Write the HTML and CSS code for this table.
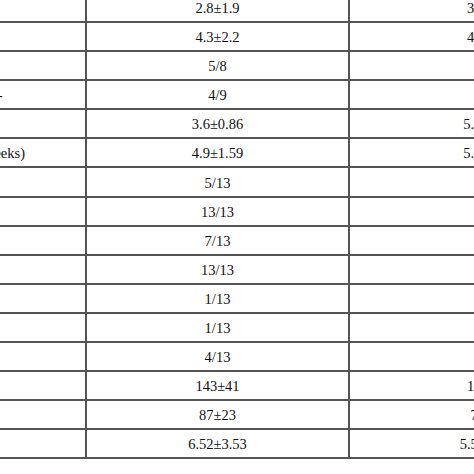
FILE: index.html
```html
<!DOCTYPE html>
<html>
<head>
<meta charset="utf-8">
<link rel="stylesheet" href="styles.css">
</head>
<body>
<div class="page">
<table class="data">
<colgroup><col class="c1"><col class="c2"><col class="c3"></colgroup>
<tbody>
<tr><td class="label">Tumor size (cm)</td><td>2.8±1.9</td><td>3.1±1.6</td></tr>
<tr><td class="label">Lesion count</td><td>4.3±2.2</td><td>4.6±2.1</td></tr>
<tr><td class="label">Male/Female</td><td>5/8</td><td>6/9</td></tr>
<tr><td class="label">Lymph node involvement -</td><td>4/9</td><td>3/8</td></tr>
<tr><td class="label">Serum CRP (mg/L)</td><td>3.6±0.86</td><td>5.1±1.02</td></tr>
<tr><td class="label">Duration of symptoms (weeks)</td><td>4.9±1.59</td><td>5.3±1.44</td></tr>
<tr><td class="label">Fever</td><td>5/13</td><td>6/12</td></tr>
<tr><td class="label">Pain</td><td>13/13</td><td>9/12</td></tr>
<tr><td class="label">Swelling</td><td>7/13</td><td>5/12</td></tr>
<tr><td class="label">Imaging findings</td><td>13/13</td><td>8/12</td></tr>
<tr><td class="label">Recurrence</td><td>1/13</td><td>2/12</td></tr>
<tr><td class="label">Complications</td><td>1/13</td><td>0/12</td></tr>
<tr><td class="label">Reoperation</td><td>4/13</td><td>3/12</td></tr>
<tr><td class="label">Platelets (×10⁹/L)</td><td>143±41</td><td>151±38</td></tr>
<tr><td class="label">Operation time (min)</td><td>87±23</td><td>79±21</td></tr>
<tr><td class="label">Hospital stay (days)</td><td>6.52±3.53</td><td>5.58±3.21</td></tr>
</tbody>
</table>
</div>
</body>
</html>
```
FILE: styles.css
```css
html, body {
  margin: 0;
  padding: 0;
  background: #fff;
}
.page {
  width: 474px;
  height: 474px;
  overflow: hidden;
  background: #fff;
}
.data {
  width: 787px;
  border-collapse: collapse;
  table-layout: fixed;
  margin: -8px 0 0 -159px;
  font-family: "Liberation Serif", "Times New Roman", serif;
  font-size: 14.5px;
  color: #111;
}
.c1 { width: 244px; }
.c2 { width: 263px; }
.c3 { width: 280px; }
.data td {
  border: 2px solid #555;
  height: 26.09px;
  padding: 1px 0 0;
  line-height: 16px;
  text-align: center;
  white-space: nowrap;
  overflow: hidden;
}
.data td.label {
  text-align: left;
  padding-left: 2px;
}
```
